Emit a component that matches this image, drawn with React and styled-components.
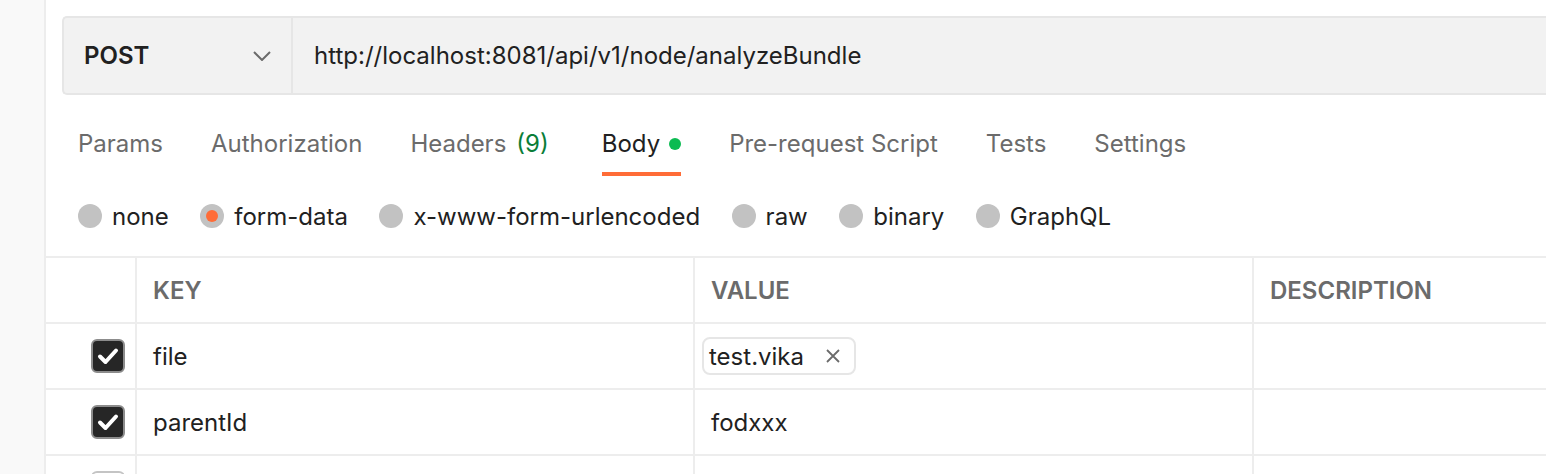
import React from 'react';
import styled, {createGlobalStyle} from 'styled-components';

const GlobalStyle = createGlobalStyle`
  html, body {
    margin: 0;
    padding: 0;
    background: #ffffff;
    overflow: hidden;
  }
  body {
    font-family: Inter, "Noto Sans", sans-serif;
    color: #212121;
  }
`;

const tabs = [
    {label: 'Params'},
    {label: 'Authorization'},
    {label: 'Headers', count: '(9)'},
    {label: 'Body', dot: true, active: true},
    {label: 'Pre-request Script'},
    {label: 'Tests'},
    {label: 'Settings'},
];

const bodyTypes = ['none', 'form-data', 'x-www-form-urlencoded', 'raw', 'binary', 'GraphQL'];

const rows = [
    {key: 'file', file: 'test.vika', checked: true},
    {key: 'parentId', value: 'fodxxx', checked: true},
    {key: '', value: '', checked: false},
];

export default function App() {
    return (
        <>
            <GlobalStyle />
            <Page>
                <Sidebar />
                <Main>
                    <UrlRow>
                        <UrlBar>
                            <Method>
                                POST
                                <svg width="18" height="10" viewBox="0 0 18 10" fill="none">
                                    <path d="M1 1l8 8 8-8" stroke="#6b6b6b" strokeWidth="2" />
                                </svg>
                            </Method>
                            <UrlInput>http://localhost:8081/api/v1/node/analyzeBundle</UrlInput>
                        </UrlBar>
                    </UrlRow>

                    <TabBar>
                        {tabs.map((t) => (
                            <Tab key={t.label} $active={t.active}>
                                {t.label}
                                {t.count && <Count>{t.count}</Count>}
                                {t.dot && <Dot />}
                            </Tab>
                        ))}
                    </TabBar>

                    <RadioRow>
                        {bodyTypes.map((b) => (
                            <RadioItem key={b}>
                                <Radio $selected={b === 'form-data'} />
                                {b}
                            </RadioItem>
                        ))}
                    </RadioRow>

                    <Table>
                        <HeadCell />
                        <HeadCell $bordered>KEY</HeadCell>
                        <HeadCell $bordered>VALUE</HeadCell>
                        <HeadCell $bordered>DESCRIPTION</HeadCell>
                        {rows.map((r, i) => (
                            <React.Fragment key={i}>
                                <CheckCell>
                                    <Checkbox $checked={r.checked}>
                                        {r.checked && (
                                            <svg width="22" height="18" viewBox="0 0 22 18" fill="none">
                                                <path d="M3 9.5l5.5 5.5L19 3.5" stroke="#ffffff" strokeWidth="4" strokeLinecap="round" strokeLinejoin="round" />
                                            </svg>
                                        )}
                                    </Checkbox>
                                </CheckCell>
                                <Cell $bordered>{r.key}</Cell>
                                <Cell $bordered $tight={!!r.file}>
                                    {r.file ? (
                                        <FileTag>
                                            {r.file}
                                            <svg width="16" height="16" viewBox="0 0 16 16" fill="none">
                                                <path d="M2 2l12 12M14 2L2 14" stroke="#6b6b6b" strokeWidth="1.8" />
                                            </svg>
                                        </FileTag>
                                    ) : r.value}
                                </Cell>
                                <Cell $bordered />
                            </React.Fragment>
                        ))}
                    </Table>
                </Main>
            </Page>
        </>
    );
}

const Page = styled.div`
  display: flex;
  width: 1546px;
  height: 474px;
  overflow: hidden;
`;

const Sidebar = styled.div`
  width: 44px;
  flex-shrink: 0;
  background: #f9f9f9;
  border-right: 2px solid #ededed;
`;

const Main = styled.div`
  flex: 1;
  display: flex;
  flex-direction: column;
  min-width: 0;
  & > * {
    flex-shrink: 0;
  }
`;

const UrlRow = styled.div`
  padding: 16px 0 0 16px;
`;

const UrlBar = styled.div`
  display: flex;
  height: 75px;
  background: #f2f2f2;
  border: 2px solid #e6e6e6;
  border-right: none;
  border-radius: 5px 0 0 5px;
`;

const Method = styled.div`
  width: 229px;
  box-sizing: border-box;
  display: flex;
  align-items: center;
  justify-content: space-between;
  padding: 0 20px 0 20px;
  border-right: 2px solid #e6e6e6;
  font-size: 24px;
  font-weight: 600;
  color: #212121;
`;

const UrlInput = styled.div`
  display: flex;
  align-items: center;
  padding-left: 21px;
  font-size: 24px;
  color: #212121;
`;

const TabBar = styled.div`
  display: flex;
  gap: 48px;
  padding-left: 32px;
  margin-top: 20px;
`;

const Tab = styled.div`
  display: flex;
  align-items: center;
  height: 57px;
  font-size: 24px;
  color: ${(p) => (p.$active ? '#212121' : '#6b6b6b')};
  border-bottom: 4px solid ${(p) => (p.$active ? '#ff6c37' : 'transparent')};
`;

const Count = styled.span`
  color: #0a7d38;
  margin-left: 10px;
  padding-right: 5px;
`;

const Dot = styled.span`
  width: 12px;
  height: 12px;
  border-radius: 50%;
  background: #0cbb52;
  margin-left: 9px;
`;

const RadioRow = styled.div`
  display: flex;
  align-items: center;
  gap: 31.5px;
  height: 80px;
  padding-left: 32px;
`;

const RadioItem = styled.div`
  display: flex;
  align-items: center;
  gap: 10px;
  font-size: 24px;
  color: #212121;
`;

const Radio = styled.span`
  width: 24px;
  height: 24px;
  border-radius: 50%;
  background: #c2c2c2;
  display: flex;
  align-items: center;
  justify-content: center;
  &::after {
    content: '';
    width: 12px;
    height: 12px;
    border-radius: 50%;
    background: ${(p) => (p.$selected ? '#ff6c37' : 'transparent')};
  }
`;

const Table = styled.div`
  display: grid;
  grid-template-columns: 89px 558px 559px 1fr;
  grid-auto-rows: 66px;
`;

const Cell = styled.div`
  display: flex;
  align-items: center;
  box-sizing: border-box;
  border-top: 2px solid #ededed;
  border-left: ${(p) => (p.$bordered ? '2px solid #ededed' : 'none')};
  padding-left: ${(p) => (p.$tight ? '7px' : '16px')};
  font-size: 24px;
  color: #212121;
`;

const HeadCell = styled(Cell)`
  font-weight: 600;
  color: #6b6b6b;
`;

const CheckCell = styled(Cell)`
  justify-content: flex-end;
  padding: 0 10px 0 0;
`;

const Checkbox = styled.span`
  width: 34px;
  height: 34px;
  box-sizing: border-box;
  border-radius: 6px;
  border: 2px solid ${(p) => (p.$checked ? '#8c8c8c' : '#c4c4c4')};
  background: ${(p) => (p.$checked ? '#262626' : '#ffffff')};
  display: flex;
  align-items: center;
  justify-content: center;
`;

const FileTag = styled.div`
  display: flex;
  align-items: center;
  gap: 21px;
  height: 38px;
  box-sizing: border-box;
  padding: 0 13px 0 5px;
  border: 2px solid #e6e6e6;
  border-radius: 8px;
`;
